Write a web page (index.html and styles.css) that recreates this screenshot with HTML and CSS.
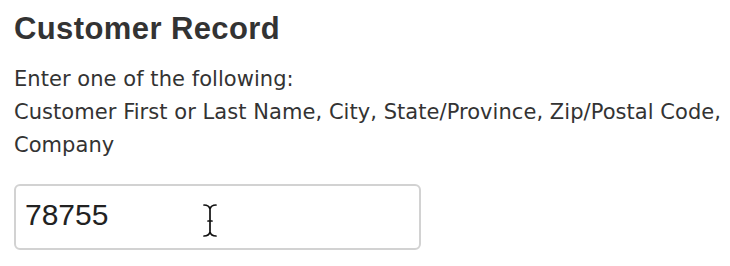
FILE: index.html
```html
<!DOCTYPE html>
<html>
<head>
<meta charset="utf-8">
<link rel="stylesheet" href="styles.css">
</head>
<body>
<div class="page">
  <h1 class="title">Customer Record</h1>
  <p class="help">Enter one of the following:<br>Customer First or Last Name, City, State/Province, Zip/Postal Code, Company</p>
  <div class="field">
    <input class="search" type="text" value="78755">
    <svg class="cursor" width="16" height="35" viewBox="0 0 16 35" aria-hidden="true">
      <path d="M2 2 Q7 2 8 6 Q9 2 14 2 M8 6 V29 M6 18 H10 M2 33 Q7 33 8 29 Q9 33 14 33" fill="none" stroke="#111" stroke-width="1.7" stroke-linecap="round"/>
    </svg>
  </div>
</div>
</body>
</html>
```
FILE: styles.css
```css
html, body {
  margin: 0;
  padding: 0;
  background: #fff;
}
.page {
  padding: 15px 0 0 14px;
  color: #333;
}
.title {
  margin: 0;
  font-family: "Liberation Sans", Arial, sans-serif;
  font-weight: bold;
  font-size: 31px;
  letter-spacing: 0.4px;
  line-height: 28px;
  color: #333;
}
.help {
  margin: 20px 0 0 0;
  font-family: "DejaVu Sans", Verdana, sans-serif;
  font-size: 21px;
  letter-spacing: 0.05px;
  line-height: 33px;
  color: #333;
  max-width: 714px;
}
.field {
  position: relative;
  margin-top: 22px;
  width: 407px;
}
.search {
  display: block;
  box-sizing: border-box;
  width: 407px;
  height: 66px;
  margin: 0;
  padding: 0 9px 5px 9px;
  border: 2px solid #d2d2d2;
  border-radius: 6px;
  background: #fff;
  font-family: "Liberation Sans", Arial, sans-serif;
  font-size: 30px;
  color: #222;
  outline: none;
}
.cursor {
  position: absolute;
  left: 188px;
  top: 19px;
}
```
